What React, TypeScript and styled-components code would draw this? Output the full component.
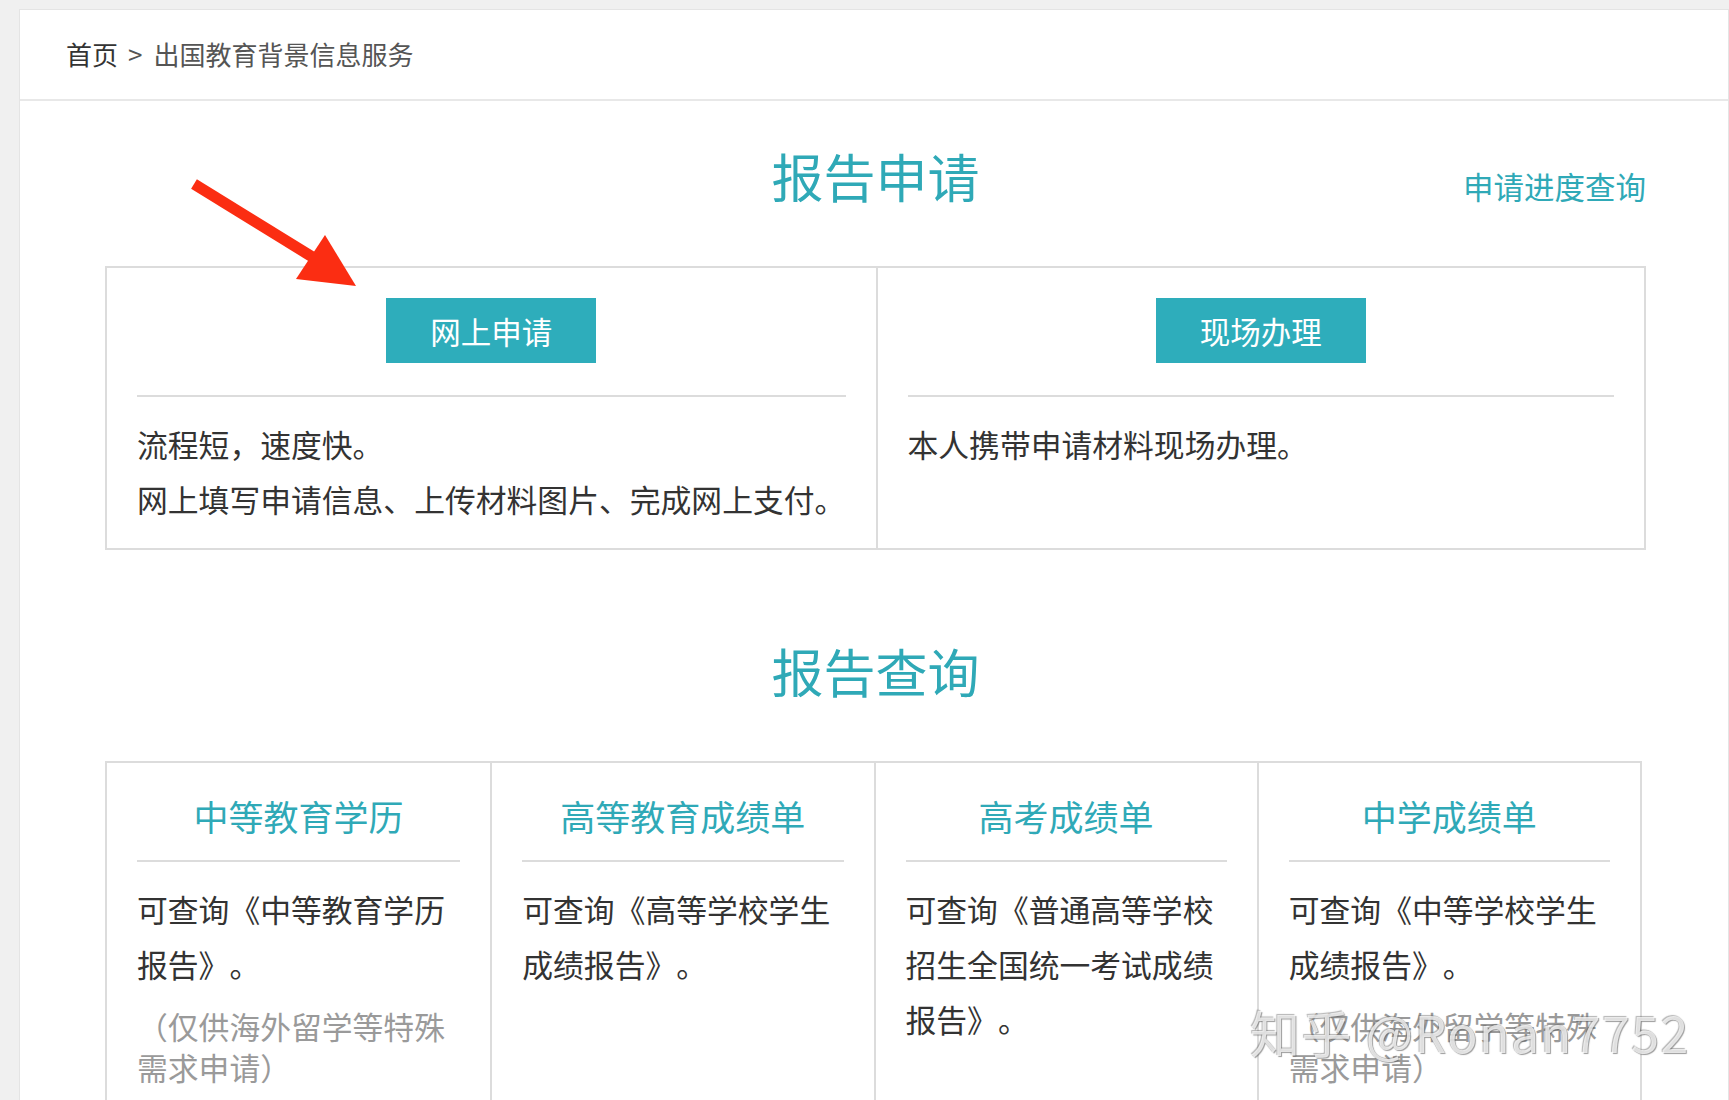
import React from 'react'
import styled, { createGlobalStyle } from 'styled-components'

const TEAL = '#2fa9b7'
const BUTTON_TEAL = '#2eadbb'
const LINE = '#dcdcdc'

const GlobalStyle = createGlobalStyle`
  html, body {
    margin: 0;
    padding: 0;
    background: #f0f0f0;
    overflow: hidden;
    font-family: "Noto Sans CJK SC", "Noto Sans", sans-serif;
    color: #333333;
    text-spacing-trim: space-all;
  }
`

const Page = styled.div`
  position: relative;
  padding: 9px 0 0 19px;
`

const Panel = styled.div`
  box-sizing: border-box;
  width: 1710px;
  background: #ffffff;
  border: 1px solid #e4e4e4;
`

const Header = styled.header`
  display: flex;
  align-items: center;
  height: 87px;
  padding: 0 0 2px 46px;
  border-bottom: 2px solid #e8e8e8;
  font-size: 26px;
`

const Crumb = styled.span<{ $current?: boolean }>`
  color: ${(p) => (p.$current ? '#555555' : '#333333')};
`

const CrumbSep = styled.span`
  margin: 0 11px 0 10px;
  color: #555555;
`

const Content = styled.main`
  padding: 39px 0 60px 85px;
`

const TitleRow = styled.div<{ $width: number; $top?: number }>`
  display: grid;
  grid-template-columns: 1fr auto 1fr;
  align-items: end;
  width: ${(p) => p.$width}px;
  margin: ${(p) => p.$top ?? 0}px 0 54px;
`

const SectionTitle = styled.h2`
  grid-column: 2;
  margin: 0;
  font-size: 52px;
  line-height: 72px;
  font-weight: 400;
  color: ${TEAL};
`

const ProgressLink = styled.a`
  grid-column: 3;
  justify-self: end;
  margin-bottom: 6px;
  font-size: 30.5px;
  line-height: 40px;
  color: ${TEAL};
  text-decoration: none;
`

const Board = styled.div<{ $cols: number; $width: number }>`
  box-sizing: border-box;
  display: grid;
  grid-template-columns: repeat(${(p) => p.$cols}, 1fr);
  width: ${(p) => p.$width}px;
  border: 2px solid ${LINE};
`

const Cell = styled.div`
  padding: 30px 30px 22px;
  border-left: 2px solid ${LINE};

  &:first-child {
    border-left: none;
  }
`

const CellHead = styled.div<{ $gap: number }>`
  display: flex;
  justify-content: center;
  padding-bottom: ${(p) => p.$gap}px;
  border-bottom: 2px solid ${LINE};
  margin-bottom: 19px;
`

const ActionButton = styled.button`
  width: 210px;
  height: 65px;
  border: none;
  background: ${BUTTON_TEAL};
  color: #ffffff;
  font-family: inherit;
  font-size: 30.5px;
  cursor: pointer;
`

const CardTitle = styled.h3`
  margin: 0;
  font-size: 35px;
  line-height: 48px;
  font-weight: 400;
  color: ${TEAL};
`

const Body = styled.p`
  margin: 0;
  font-size: 30.8px;
  line-height: 55px;
  color: #333333;
`

const Note = styled.p`
  margin: 14px 0 0;
  font-size: 30.8px;
  line-height: 41px;
  color: #9a9a9a;
`

const QueryBoard = styled(Board)`
  margin-bottom: 80px;
  ${Cell} {
    padding-top: 29px;
    min-height: 420px;
  }
`

const Arrow = styled.svg`
  position: absolute;
  left: 190px;
  top: 178px;
`

const Watermark = styled.div`
  position: absolute;
  left: 1250px;
  top: 996px;
  font-size: 50px;
  line-height: 70px;
  color: rgba(255, 255, 255, 0.75);
  text-shadow: 1px 1px 1px rgba(90, 90, 90, 0.6), -1px -1px 1px rgba(90, 90, 90, 0.45);
  letter-spacing: 1.5px;
  pointer-events: none;
  white-space: pre;
`

const APPLY = [
  { button: '网上申请', lines: ['流程短，速度快。', '网上填写申请信息、上传材料图片、完成网上支付。'] },
  { button: '现场办理', lines: ['本人携带申请材料现场办理。'] },
]

const QUERIES = [
  { title: '中等教育学历', body: '可查询《中等教育学历报告》。', note: '（仅供海外留学等特殊需求申请）' },
  { title: '高等教育成绩单', body: '可查询《高等学校学生成绩报告》。' },
  { title: '高考成绩单', body: '可查询《普通高等学校招生全国统一考试成绩报告》。' },
  { title: '中学成绩单', body: '可查询《中等学校学生成绩报告》。', note: '（仅供海外留学等特殊需求申请）' },
]

export default function App() {
  return (
    <>
      <GlobalStyle />
      <Page>
        <Panel>
          <Header>
            <Crumb>首页</Crumb>
            <CrumbSep>&gt;</CrumbSep>
            <Crumb $current>出国教育背景信息服务</Crumb>
          </Header>

          <Content>
            <TitleRow $width={1541}>
              <SectionTitle>报告申请</SectionTitle>
              <ProgressLink href="#">申请进度查询</ProgressLink>
            </TitleRow>

            <Board $cols={2} $width={1541}>
              {APPLY.map((item) => (
                <Cell key={item.button}>
                  <CellHead $gap={32}>
                    <ActionButton type="button">{item.button}</ActionButton>
                  </CellHead>
                  {item.lines.map((line) => (
                    <Body key={line}>{line}</Body>
                  ))}
                </Cell>
              ))}
            </Board>

            <TitleRow $width={1541} $top={85}>
              <SectionTitle>报告查询</SectionTitle>
            </TitleRow>

            <QueryBoard $cols={4} $width={1537}>
              {QUERIES.map((q) => (
                <Cell key={q.title}>
                  <CellHead $gap={20}>
                    <CardTitle>{q.title}</CardTitle>
                  </CellHead>
                  <Body>{q.body}</Body>
                  {q.note && <Note>{q.note}</Note>}
                </Cell>
              ))}
            </QueryBoard>
          </Content>
        </Panel>

        <Arrow width="170" height="115" viewBox="0 0 170 115">
          <line x1="4" y1="6" x2="124" y2="80" stroke="#fb2d12" strokeWidth="11" strokeLinecap="butt" />
          <polygon points="135,57 166,108 106,101" fill="#fb2d12" />
        </Arrow>

        <Watermark>{'知乎 @Ronan7752'}</Watermark>
      </Page>
    </>
  )
}
